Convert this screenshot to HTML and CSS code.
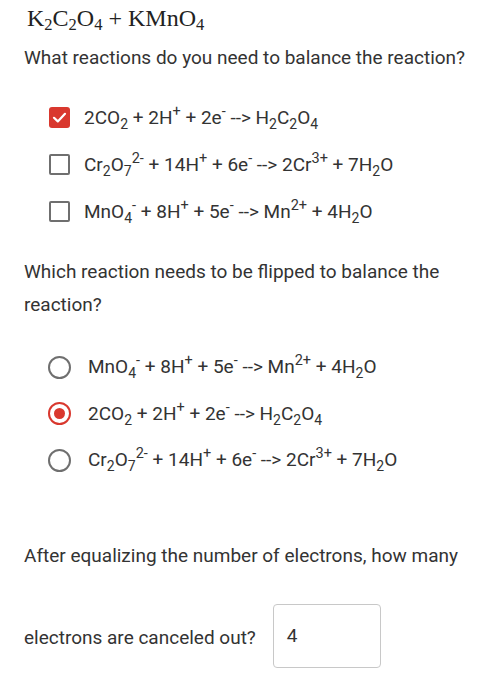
FILE: index.html
```html
<!DOCTYPE html>
<html>
<head>
<meta charset="utf-8">
<link rel="stylesheet" href="styles.css">
</head>
<body>
<div class="page">
  <div class="title">K<sub>2</sub>C<sub>2</sub>O<sub>4</sub> + KMnO<sub>4</sub></div>
  <p class="q q1">What reactions do you need to balance the reaction?</p>
  <div class="list checks">
    <div class="row"><span class="box checked"><svg viewBox="0 0 21 21" width="21" height="21"><path d="M5 10.8 L8.8 14.4 L16 6.8" fill="none" stroke="#fff" stroke-width="2.2" stroke-linecap="round" stroke-linejoin="round"/></svg></span><span class="eq">2CO<sub>2</sub> + 2H<sup>+</sup> + 2e<sup>-</sup> --&gt; H<sub>2</sub>C<sub>2</sub>O<sub>4</sub></span></div>
    <div class="row"><span class="box"></span><span class="eq">Cr<sub>2</sub>O<sub>7</sub><sup>2-</sup> + 14H<sup>+</sup> + 6e<sup>-</sup> --&gt; 2Cr<sup>3+</sup> + 7H<sub>2</sub>O</span></div>
    <div class="row"><span class="box"></span><span class="eq">MnO<sub>4</sub><sup>-</sup> + 8H<sup>+</sup> + 5e<sup>-</sup> --&gt; Mn<sup>2+</sup> + 4H<sub>2</sub>O</span></div>
  </div>
  <p class="q q2">Which reaction needs to be flipped to balance the reaction?</p>
  <div class="list radios">
    <div class="row"><span class="radio"></span><span class="eq">MnO<sub>4</sub><sup>-</sup> + 8H<sup>+</sup> + 5e<sup>-</sup> --&gt; Mn<sup>2+</sup> + 4H<sub>2</sub>O</span></div>
    <div class="row"><span class="radio checked"></span><span class="eq">2CO<sub>2</sub> + 2H<sup>+</sup> + 2e<sup>-</sup> --&gt; H<sub>2</sub>C<sub>2</sub>O<sub>4</sub></span></div>
    <div class="row"><span class="radio"></span><span class="eq">Cr<sub>2</sub>O<sub>7</sub><sup>2-</sup> + 14H<sup>+</sup> + 6e<sup>-</sup> --&gt; 2Cr<sup>3+</sup> + 7H<sub>2</sub>O</span></div>
  </div>
  <p class="q q3">After equalizing the number of electrons, how many</p>
  <div class="answer-row">
    <span class="q">electrons are canceled out?</span>
    <span class="input">4</span>
  </div>
</div>
</body>
</html>
```
FILE: styles.css
```css
html, body {
  margin: 0;
  padding: 0;
  background: #fff;
}
.page {
  width: 492px;
  padding: 4px 24px 0 24px;
  box-sizing: border-box;
  font-family: Roboto, "Liberation Sans", sans-serif;
  color: #333;
}
.title {
  font-family: "Liberation Serif", "DejaVu Serif", serif;
  font-size: 24px;
  line-height: 28px;
  color: #222;
  padding-left: 3px;
}
.title sub {
  font-size: 16.5px;
  vertical-align: -4px;
  line-height: 0;
}
.q {
  margin: 0;
  font-size: 19px;
  line-height: 33px;
}
.q1 {
  margin-top: 9px;
}
.list {
  display: flex;
  flex-direction: column;
}
.checks {
  margin-top: 20px;
  padding-left: 25px;
}
.checks .row {
  height: 47px;
}
.row {
  display: flex;
  align-items: center;
}
.eq {
  font-size: 19px;
  line-height: 20px;
  white-space: nowrap;
}
.eq sub {
  font-size: 14px;
  vertical-align: -5px;
  line-height: 0;
}
.eq sup {
  font-size: 14.5px;
  vertical-align: 8px;
  line-height: 0;
}
.box {
  width: 21px;
  height: 21px;
  box-sizing: border-box;
  border: 2px solid #6f6f6f;
  border-radius: 2px;
  margin-right: 14px;
  flex: none;
  display: flex;
}
.box.checked {
  border: none;
  background: #d9382e;
  border-radius: 3px;
}
.q2 {
  margin-top: 20px;
}
.radios {
  margin-top: 23px;
  padding-left: 24px;
}
.radios .row {
  height: 46.5px;
}
.radio {
  width: 23px;
  height: 23px;
  box-sizing: border-box;
  border: 2px solid #6f6f6f;
  border-radius: 50%;
  margin-right: 17px;
  flex: none;
  display: flex;
  align-items: center;
  justify-content: center;
}
.radio.checked {
  border-color: #d9382e;
}
.radio.checked::after {
  content: "";
  width: 11px;
  height: 11px;
  border-radius: 50%;
  background: #d9382e;
}
.q3 {
  margin-top: 55px;
}
.answer-row {
  margin-top: 32px;
  display: flex;
  align-items: center;
}
.answer-row .q {
  padding-top: 4px;
}
.input {
  margin-left: 17px;
  width: 108px;
  height: 64px;
  box-sizing: border-box;
  border: 1px solid #c8c8c8;
  border-radius: 4px;
  padding-left: 13px;
  display: flex;
  align-items: center;
  font-size: 19px;
  color: #333;
}
```
